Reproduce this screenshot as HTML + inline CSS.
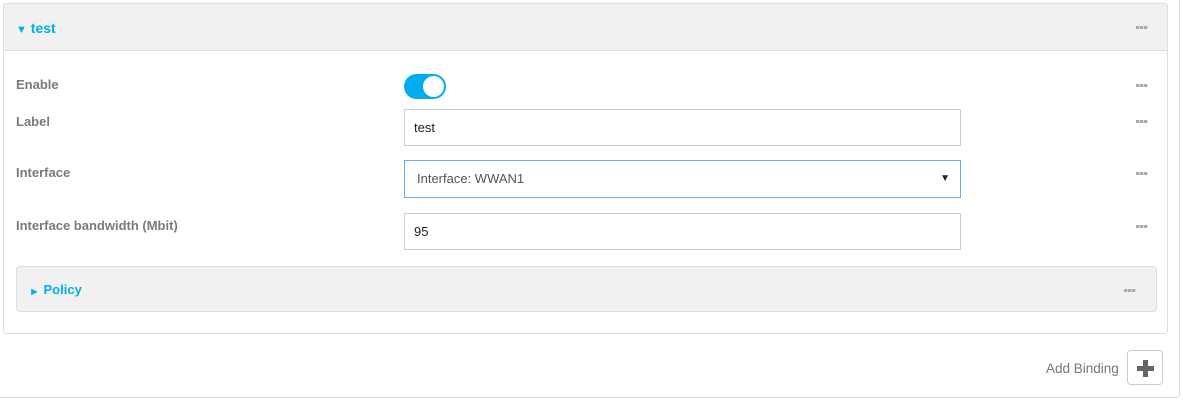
<!DOCTYPE html>
<html><head><meta charset="utf-8"><style>
*{box-sizing:border-box}
body{margin:0;width:1183px;height:401px;background:#fff;font-family:"Liberation Sans",sans-serif;position:relative;overflow:hidden}
.outer{position:absolute;left:-2px;top:-2px;width:1182px;height:400px;border:1px solid #ddd;border-radius:3px}
.panel{position:absolute;left:3px;top:3px;width:1165px;height:331px;border:1px solid #ddd;border-radius:3px;overflow:hidden}
.hdr{position:absolute;left:0;top:0;right:0;height:47px;background:#f1f1f1;border-bottom:1px solid #ddd}
.t{position:absolute;color:#00aeef;font-weight:bold;font-size:14px}
.lbl{position:absolute;left:12px;color:#7a7a7a;font-weight:bold;font-size:13px}
.dots{position:absolute;width:12px;height:3px;background:repeating-linear-gradient(90deg,#aaa 0 3px,#ddd 3px 4px)}
.inp{position:absolute;left:400px;width:557px;border:1px solid #ccc;background:#fff;font-size:13px;color:#222;padding-left:9px}
.sw{position:absolute;left:400px;top:70px;width:42px;height:25px;border-radius:13px;background:#00aeef}
.sw:after{content:"";position:absolute;right:2px;top:2px;width:21px;height:21px;border-radius:50%;background:#fff}
.pol{position:absolute;left:12px;top:262px;width:1141px;height:46px;background:#f1f1f1;border:1px solid #ddd;border-radius:4px}
</style></head><body>
<div class="outer"></div>
<div class="panel">
 <div class="hdr">
  <div class="t" style="left:12px;top:16px"><span style="font-size:11px">▼</span> test</div>
  <div class="dots" style="left:1132px;top:22px"></div>
 </div>
 <div class="lbl" style="top:73px">Enable</div>
 <div class="sw"></div>
 <div class="dots" style="left:1132px;top:80px"></div>
 <div class="lbl" style="top:110px">Label</div>
 <div class="inp" style="top:105px;height:37px;line-height:35px">test</div>
 <div class="dots" style="left:1132px;top:116px"></div>
 <div class="lbl" style="top:161px">Interface</div>
 <div class="inp" style="top:156px;height:38px;line-height:36px;border-color:#66afe9;color:#555;padding-left:12px">Interface: WWAN1<span style="position:absolute;right:10px;top:0;font-size:10px;color:#222">▼</span></div>
 <div class="dots" style="left:1132px;top:168px"></div>
 <div class="lbl" style="top:214px">Interface bandwidth (Mbit)</div>
 <div class="inp" style="top:209px;height:37px;line-height:35px">95</div>
 <div class="dots" style="left:1132px;top:221px"></div>
 <div class="pol">
  <div class="t" style="left:12px;top:15px;font-size:13px"><span style="font-size:11px;position:relative;top:1px">►</span> Policy</div>
  <div class="dots" style="left:1107px;top:22px"></div>
 </div>
</div>
<div style="position:absolute;left:1046px;top:361px;font-size:13.5px;color:#777">Add Binding</div>
<div style="position:absolute;left:1127px;top:350px;width:36px;height:35px;border:1px solid #ccc;border-radius:4px;background:#fff">
 <div style="position:absolute;left:9px;top:15px;width:17px;height:5px;background:#666"></div>
 <div style="position:absolute;left:15px;top:9px;width:5px;height:17px;background:#666"></div>
</div>
</body></html>
